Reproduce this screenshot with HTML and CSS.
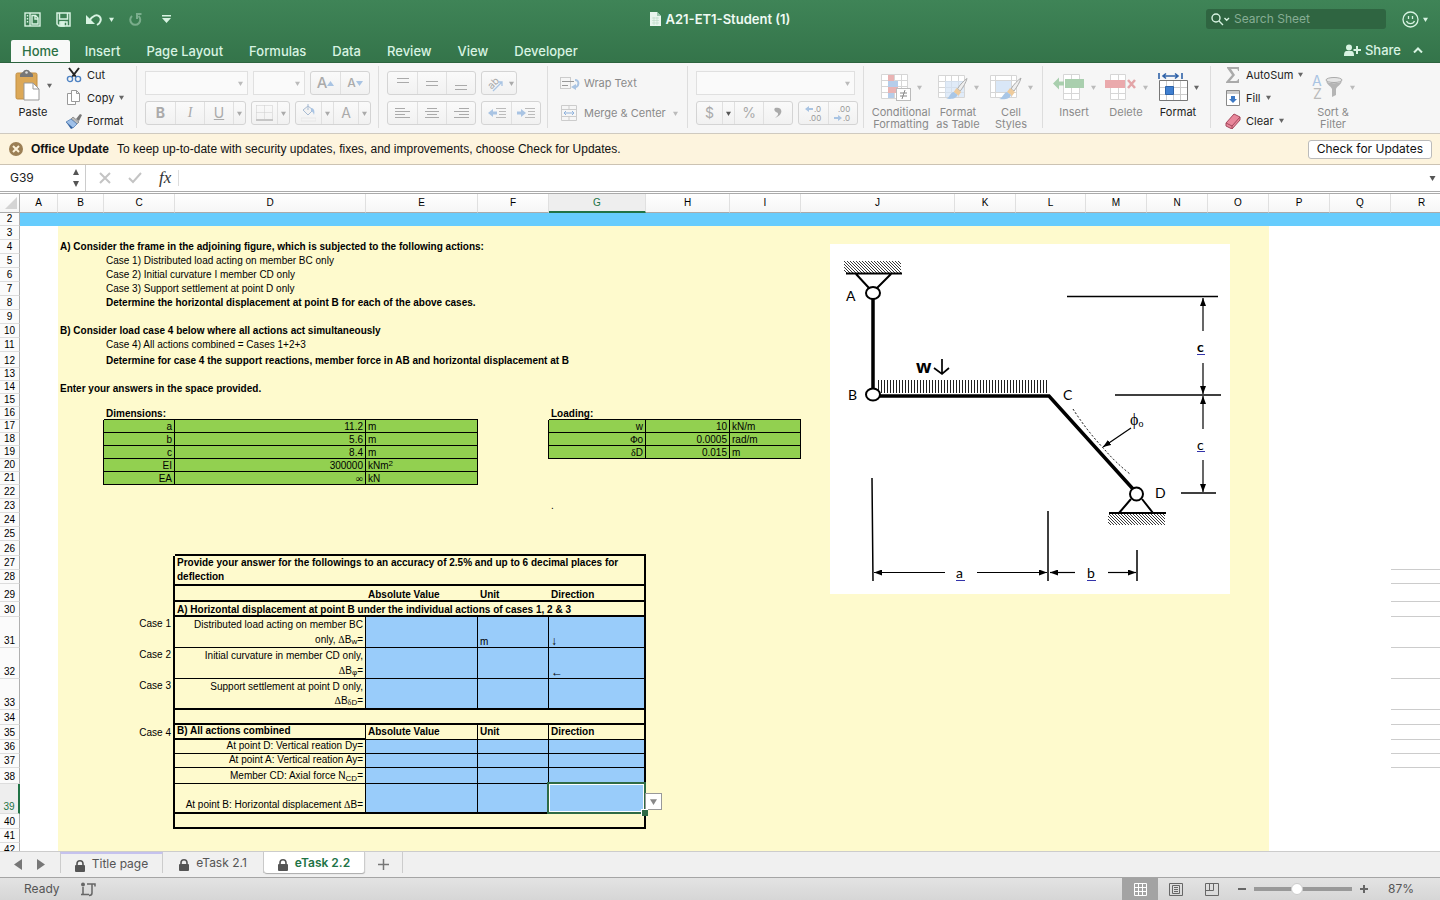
FILE: index.html
```html
<!DOCTYPE html>
<html lang="en">
<head>
<meta charset="utf-8">
<title>A21-ET1-Student (1)</title>
<link rel="stylesheet" href="styles.css">
</head>
<body>
<svg width="0" height="0" class="defs" aria-hidden="true">
  <symbol id="caret" viewBox="0 0 6 6"><path d="M0 1h6L3 6z" fill="currentColor"/></symbol>
  <symbol id="lock" viewBox="0 0 10 12"><path d="M2 6V3.800a3 3 0 0 1 6 0V6" fill="none" stroke="currentColor" stroke-width="1.600"/><rect y="5" width="10" height="7" rx="1" fill="currentColor"/></symbol>
  <symbol id="brush" viewBox="0 0 24 24"><path d="M23 1c-3 2-8 7-10 11l3 2c3-4 6-9 7-13z" fill="#eee" stroke="#aaa"/><path d="M12 11l5 4-3 4-5-4z" fill="#eecb9c"/><path d="M9 15l4 3c-1 4-6 5-12 4 4-1 4-6 8-7z" fill="#a8c6e6"/></symbol>
</svg>

<header class="masthead">
  <div class="titlebar">
    <div class="quick">
      <button aria-label="Gallery"><svg width="17" height="15" viewBox="0 0 17 15" fill="none" stroke="currentColor" stroke-width="1.400"><rect x="1" y="1" width="15" height="13"/><path d="M8 3.500h3.500L14 6v6H8zM11 4v3h3"/><path d="M3.500 3v9" stroke-dasharray="1.500 1.500"/><path d="M6 1v13"/></svg></button>
      <button aria-label="Save"><svg width="15" height="15" viewBox="0 0 15 15" fill="none" stroke="currentColor" stroke-width="1.500"><path d="M1 1h13v13H3l-2-2zM3.500 1v6h8V1"/><path d="M4 14v-4h7v4"/><path d="M5 10h3v4H5z" fill="currentColor"/></svg></button>
      <button class="undo" aria-label="Undo"><svg width="16" height="14" viewBox="0 0 16 14" fill="none" stroke="currentColor" stroke-width="2"><path d="M3 9c4-6 8-7 10.500-4.500S14.500 11 11 13"/><path d="M0 3v9h9z" fill="currentColor" stroke="none"/></svg><svg class="caret" width="5" height="5"><use href="#caret"/></svg></button>
      <button class="redo" aria-label="Repeat"><svg width="13" height="14" viewBox="0 0 13 14" fill="none" stroke="currentColor" stroke-width="2"><path d="M3 4a5 5 0 1 0 6.500 0"/><path d="M8 7V2h4.500"/></svg></button>
      <button aria-label="Customize toolbar"><svg width="9" height="8" viewBox="0 0 9 8" fill="currentColor"><path d="M0 0h9v1.500H0zM0 3h9L4.500 8z"/></svg></button>
    </div>
    <h1 class="doc"><svg width="11" height="14" viewBox="0 0 11 14"><path d="M0 0h7l4 4v10H0z" fill="#e9f5ee"/><path d="M7 0v4h4z" fill="#9cc9ae"/><path d="M2 6h7M2 8.500h7M2 11h7M4 5v8M7 5v8" stroke="#b9d8c5" stroke-width=".6"/></svg>A21-ET1-Student (1)</h1>
    <div class="tools">
      <label class="search"><svg width="20" height="13" viewBox="0 0 20 13" fill="none" stroke="#d8f3e2" stroke-width="1.400"><circle cx="5" cy="5" r="4"/><path d="M8 8l4 4M13.500 5l2.200 2.200L18 5"/></svg><input type="text" placeholder="Search Sheet" aria-label="Search Sheet"></label>
      <button class="smile" aria-label="Feedback"><svg width="17" height="17" viewBox="0 0 17 17" fill="none" stroke="currentColor" stroke-width="1.300"><circle cx="8.500" cy="8.500" r="7.500"/><path d="M4.500 10c1.500 3.500 6.500 3.500 8 0M6.500 5v3M10.500 5v3"/></svg><svg class="caret" width="5" height="5"><use href="#caret"/></svg></button>
    </div>
  </div>
  <nav class="tabs">
    <button class="on">Home</button><button>Insert</button><button>Page Layout</button><button>Formulas</button><button>Data</button><button>Review</button><button>View</button><button>Developer</button>
    <div class="share">
      <button><svg width="17" height="13" viewBox="0 0 17 13" fill="currentColor"><circle cx="5" cy="3.500" r="3"/><path d="M0 12c0-4 1-5 3-5h4c2 0 3 1 3 5zM12 2h2v3h3v2h-3v3h-2V7H9.500V5H12z"/></svg>Share</button>
      <button aria-label="Collapse ribbon"><svg width="10" height="6" viewBox="0 0 10 6" fill="none" stroke="currentColor" stroke-width="2"><path d="M1 5.500L5 1.500l4 4"/></svg></button>
    </div>
  </nav>
</header>

<section class="ribbon" aria-label="Home">
  <div class="group clip">
    <button class="big live">
      <span class="pic"><svg width="26" height="32" viewBox="0 0 26 32"><rect x="1" y="4" width="21" height="26" rx="1.500" fill="#dca857" stroke="#c18f45"/><path d="M5 6c0-2 2-2 3-3 1-3 6-3 7 0 1 1 3 1 3 3v2H5z" fill="#777"/><circle cx="11.500" cy="3.500" r="1.300" fill="#ddd"/><path d="M9 14h9l6 6v11H9z" fill="#fff" stroke="#999"/><path d="M18 14v6h6" fill="none" stroke="#999"/></svg><svg class="caret" width="5" height="5"><use href="#caret"/></svg></span>
      <span>Paste</span>
    </button>
    <div class="stack">
      <button><svg width="16" height="16" viewBox="0 0 16 16" fill="none"><path d="M3 1l7 9M13 1L6 10" stroke="#222" stroke-width="2"/><circle cx="4" cy="12" r="2.600" stroke="#4d82c3" stroke-width="1.400"/><circle cx="12" cy="12" r="2.600" stroke="#4d82c3" stroke-width="1.400"/></svg>Cut</button>
      <button><svg width="16" height="16" viewBox="0 0 16 16" fill="#fff" stroke="#999"><path d="M1.500 3.500h5l3 3v8h-8z"/><path d="M5.500 .5h5l3 3v8h-8zM10.500 .5v3h3"/></svg>Copy<svg class="caret" width="5" height="5"><use href="#caret"/></svg></button>
      <button><svg width="16" height="16" viewBox="0 0 16 16"><path d="M10 6l4-5 2 1-3 6z" fill="#777"/><path d="M7 4l6 5-2 2-6-5z" fill="#bbb" stroke="#777" stroke-width=".7"/><path d="M5 6l6 5-4 4-7-6z" fill="#9fc0e8" stroke="#4876ad" stroke-width=".7"/><path d="M0 9l7 6-2 1z" fill="#2f5f9e"/></svg>Format</button>
    </div>
  </div>

  <div class="group rows font">
    <div class="line">
      <span class="pick wide"><select aria-label="Font" disabled><option></option></select><svg class="caret" width="5" height="5"><use href="#caret"/></svg></span>
      <span class="pick small"><select aria-label="Font size" disabled><option></option></select><svg class="caret" width="5" height="5"><use href="#caret"/></svg></span>
      <span class="seg"><button disabled aria-label="Increase font size"><b class="l15">A</b><svg width="7" height="5" viewBox="0 0 7 5"><path d="M0 5h7L3.500 0z" fill="#a9c4e3"/></svg></button><button disabled aria-label="Decrease font size"><b class="l12">A</b><svg width="7" height="5" viewBox="0 0 7 5"><path d="M0 0h7L3.500 5z" fill="#a9c4e3"/></svg></button></span>
    </div>
    <div class="line">
      <span class="seg"><button disabled><b>B</b></button><button disabled><i class="serif">I</i></button><button disabled><u>U</u></button><button class="drop" disabled aria-label="Underline style"><svg width="5" height="5"><use href="#caret"/></svg></button></span>
      <span class="seg"><button class="mid" disabled aria-label="Borders"><svg width="17" height="16" viewBox="0 0 17 16" fill="none" stroke="#ccc"><path d="M.5.500h16v14M.5.500v14M8.500.500v14M.5 7.500h16" stroke-dasharray="1 1"/><path d="M0 15h17" stroke="#999"/></svg></button><button class="drop" disabled aria-label="Border style"><svg width="5" height="5"><use href="#caret"/></svg></button></span>
      <span class="seg"><button class="mid" disabled aria-label="Fill color"><svg width="15" height="18" viewBox="0 0 15 18"><path d="M2 6l5-4 5 4-5 5z" fill="#f2f2f2" stroke="#a9bcd3"/><path d="M7 0v6" stroke="#a9bcd3"/><path d="M10 4c3 0 4 3 3 7-1-3-2-4-3-4z" fill="#a9c4e3"/><path d="M0 14h15v3H0z" fill="#f4f4f4" stroke="#ddd" stroke-width=".5"/></svg></button><button class="drop" disabled aria-label="Fill choices"><svg width="5" height="5"><use href="#caret"/></svg></button><button class="mid" disabled>A</button><button class="drop" disabled aria-label="Font color choices"><svg width="5" height="5"><use href="#caret"/></svg></button></span>
    </div>
  </div>

  <div class="group rows align">
    <div class="line">
      <span class="seg"><button disabled aria-label="Top align"><svg width="16" height="16" viewBox="0 0 16 16" stroke="#aaa"><path d="M2 3.500h12M2 7.500h12"/></svg></button><button disabled aria-label="Middle align"><svg width="16" height="16" viewBox="0 0 16 16" stroke="#aaa"><path d="M2 6.500h12M2 10.500h12"/></svg></button><button disabled aria-label="Bottom align"><svg width="16" height="16" viewBox="0 0 16 16" stroke="#aaa"><path d="M2 10.500h12M2 14.500h12"/></svg></button></span>
      <span class="seg"><button class="orient" disabled aria-label="Orientation"><svg width="20" height="20" viewBox="0 0 20 20"><text x="3" y="14" transform="rotate(-45 8 11)" class="ab">ab</text><path d="M8 18l9-9M17 13V9h-4" fill="none" stroke="#a9c4e3" stroke-width="1.300"/></svg><svg width="5" height="5"><use href="#caret"/></svg></button></span>
    </div>
    <div class="line">
      <span class="seg"><button disabled aria-label="Align left"><svg width="16" height="12" viewBox="0 0 16 12" stroke="#aaa"><path d="M0 1.500h10M0 4.500h15M0 7.500h10M0 10.500h15"/></svg></button><button disabled aria-label="Center"><svg width="16" height="12" viewBox="0 0 16 12" stroke="#aaa"><path d="M3 1.500h10M1 4.500h14M3 7.500h10M1 10.500h14"/></svg></button><button disabled aria-label="Align right"><svg width="16" height="12" viewBox="0 0 16 12" stroke="#aaa"><path d="M6 1.500h10M1 4.500h15M6 7.500h10M1 10.500h15"/></svg></button></span>
      <span class="seg"><button disabled aria-label="Decrease indent"><svg width="18" height="12" viewBox="0 0 18 12"><path d="M8 1.500h10M11 4.500h7M11 7.500h7M8 10.500h10" stroke="#bbb"/><path d="M0 6l5-4v2.500h4v3H5V10z" fill="#a9c4e3"/></svg></button><button disabled aria-label="Increase indent"><svg width="18" height="12" viewBox="0 0 18 12"><path d="M8 1.500h10M11 4.500h7M11 7.500h7M8 10.500h10" stroke="#bbb"/><path d="M9 6L4 2v2.500H0v3h4V10z" fill="#a9c4e3"/></svg></button></span>
    </div>
  </div>

  <div class="group rows wrap">
    <button class="plain" disabled><svg width="20" height="14" viewBox="0 0 20 14" fill="none"><rect x=".5" y="1.500" width="10" height="11" stroke="#ccc"/><path d="M2 5.500h12M2 9.500h6" stroke="#999"/><path d="M15 4c5 0 4 7 0 7" stroke="#a9c4e3" stroke-width="2"/><path d="M11 11l5-3v6z" fill="#a9c4e3"/></svg>Wrap Text</button>
    <button class="plain" disabled><svg width="20" height="16" viewBox="0 0 20 16" fill="none"><path d="M1.500.500h15v15h-15zM1.500 4.500h15M1.500 11.500h15M9 .5v4M9 11.500v4" stroke="#ccc"/><path d="M4 8h10M6 6L4 8l2 2M12 6l2 2-2 2" stroke="#8fb2dc"/></svg>Merge &amp; Center<svg class="caret" width="5" height="5"><use href="#caret"/></svg></button>
  </div>

  <div class="group rows number">
    <div class="line"><span class="pick format"><select aria-label="Number format" disabled><option></option></select><svg class="caret" width="5" height="5"><use href="#caret"/></svg></span></div>
    <div class="line">
      <span class="seg"><button class="mid" disabled>$</button><button class="drop dark" aria-label="Currency"><svg width="5" height="5"><use href="#caret"/></svg></button><button disabled>%</button><button disabled aria-label="Comma style"><svg width="8" height="12" viewBox="0 0 8 12"><path d="M1 1c8-2 9 7 0 10 4-3 4-5 1-6-2-1-2-3-1-4z" fill="#aaa"/></svg></button></span>
      <span class="seg"><button class="dec" disabled aria-label="Increase decimal"><svg width="20" height="17" viewBox="0 0 20 17"><path d="M1 4l4-3v2h4v2H5v2z" fill="#a9c4e3"/><text x="10" y="7">.0</text><text x="5" y="16">.00</text></svg></button><button class="dec" disabled aria-label="Decrease decimal"><svg width="20" height="17" viewBox="0 0 20 17"><path d="M9 13L5 10v2H1v2h4v2z" fill="#a9c4e3"/><text x="5" y="7">.00</text><text x="10" y="16">.0</text></svg></button></span>
    </div>
  </div>

  <div class="group styles">
    <button class="big w60" disabled>
      <span class="pic"><svg width="30" height="30" viewBox="0 0 30 30"><path d="M.5 2.500h26v24H.500zM.5 8.500h26M.5 14.500h26M.5 20.500h26M7.500 2.500v24M13.500 2.500v24M20.500 2.500v24" fill="#fff" stroke="#d6d6d6"/><path d="M7 3h6v6H7zM7 15h10v6H7z" fill="#e9b3b3"/><path d="M7 9h10v6H7zM7 21h6v5H7z" fill="#b5cdea"/><rect x="15.500" y="16.500" width="14" height="12" fill="#fff" stroke="#bbb"/><path d="M19 21h7M19 24h7M24 18l-3 9" stroke="#888"/></svg><svg class="caret" width="5" height="5"><use href="#caret"/></svg></span>
      <span>Conditional<br>Formatting</span>
    </button>
    <button class="big w54" disabled>
      <span class="pic"><svg width="30" height="30" viewBox="0 0 30 30"><path d="M.5 3.500h26v22H.500zM.5 9.500h26M.5 15.500h26M.5 20.500h26M7.500 3.500v22M13.500 3.500v22M20.500 3.500v22" fill="#fff" stroke="#d6d6d6"/><path d="M7 9h19v16H7z" fill="#d3e3f5" opacity=".7"/><use href="#brush" x="7" y="5" width="23" height="24"/></svg><svg class="caret" width="5" height="5"><use href="#caret"/></svg></span>
      <span>Format<br>as Table</span>
    </button>
    <button class="big w52" disabled>
      <span class="pic"><svg width="32" height="30" viewBox="0 0 32 30"><path d="M.5 3.500h26v22H.500zM.5 8.500h26M.5 20.500h26M5.500 3.500v22M21.500 3.500v22" fill="#fff" stroke="#d6d6d6"/><path d="M6 9h15v11H6z" fill="#d9e7f7"/><use href="#brush" x="8" y="5" width="24" height="24"/></svg><svg class="caret" width="5" height="5"><use href="#caret"/></svg></span>
      <span>Cell<br>Styles</span>
    </button>
  </div>

  <div class="group cells">
    <button class="big w52" disabled>
      <span class="pic"><svg width="32" height="30" viewBox="0 0 32 30"><path d="M10.500 2.500h16v25h-16zM18.500 2.500v25M10.500 21.500h16" fill="#fff" stroke="#d6d6d6"/><path d="M0 11.500l6-6v4h5v4H6v4z" fill="#a9cfae"/><path d="M12 7h19v9H12z" fill="#a9cfae"/></svg><svg class="caret" width="5" height="5"><use href="#caret"/></svg></span>
      <span>Insert</span>
    </button>
    <button class="big w52" disabled>
      <span class="pic"><svg width="32" height="30" viewBox="0 0 32 30"><path d="M5.500 2.500h15v25h-15zM13.500 2.500v25M5.500 21.500h15" fill="#fff" stroke="#d6d6d6"/><path d="M0 8h20v8H0z" fill="#eaa9ac"/><path d="M23 8l7 8M30 8l-7 8" stroke="#e3a5a8" stroke-width="2.500"/></svg><svg class="caret" width="5" height="5"><use href="#caret"/></svg></span>
      <span>Delete</span>
    </button>
    <button class="big w52 live">
      <span class="pic"><svg width="30" height="30" viewBox="0 0 30 30"><path d="M1 1v6M24 1v6M5 4h15M8 1.500L5 4l3 2.500M17 1.500L20 4l-3 2.500" fill="none" stroke="#2f62a8" stroke-width="1.600"/><path d="M1.500 8.500h28v20h-28z" fill="#fff" stroke="#777"/><path d="M8.500 9v19M15.500 9v19M22.500 9v19M2 15.500h27M2 22.500h27" stroke="#ccc"/><path d="M7.500 14.500h8v8h-8z" fill="#3f7fd0" stroke="#2c62a8"/></svg><svg class="caret" width="5" height="5"><use href="#caret"/></svg></span>
      <span>Format</span>
    </button>
  </div>

  <div class="group edit">
    <div class="stack">
      <button><svg width="16" height="16" viewBox="0 0 16 16"><path d="M2 0h12v4h-1c0-2-1-2-2-2H6l4 6-5 6h6c1 0 2-1 2-2h1v4H1v-1l6-7-5-7z" fill="#aaa"/></svg>AutoSum<svg class="caret" width="5" height="5"><use href="#caret"/></svg></button>
      <button><svg width="16" height="16" viewBox="0 0 16 16"><path d="M1.500.500h13v15h-13z" fill="#fff" stroke="#888"/><path d="M2 1h12v3H2z" fill="#ccc"/><path d="M6 6h4v3h2l-4 4-4-4h2z" fill="#3b78c4"/></svg>Fill<svg class="caret" width="5" height="5"><use href="#caret"/></svg></button>
      <button><svg width="16" height="16" viewBox="0 0 16 16" stroke="#a4485c"><path d="M1 10L9 1l6 3v3l-8 9-6-3z" fill="#e8879b"/><path d="M1 10l6 3 8-9M7 13v3" fill="none"/></svg>Clear<svg class="caret" width="5" height="5"><use href="#caret"/></svg></button>
    </div>
    <button class="big w52" disabled>
      <span class="pic"><svg width="32" height="30" viewBox="0 0 32 30"><text x="0" y="14" class="az blue">A</text><text x="1" y="27" class="az">Z</text><ellipse cx="22" cy="8" rx="8" ry="2.500" fill="#e6e6e6" stroke="#aaa"/><path d="M14 9c1 4 5 5 6 8v8l4-2v-6c1-3 5-4 6-8-3 3-13 3-16 0z" fill="#b5b5b5"/></svg><svg class="caret" width="5" height="5"><use href="#caret"/></svg></span>
      <span>Sort &amp;<br>Filter</span>
    </button>
  </div>
</section>

<div class="update">
  <button class="dismiss" aria-label="Dismiss"><svg width="14" height="14" viewBox="0 0 14 14"><circle cx="7" cy="7" r="7" fill="#9b7f55"/><path d="M4 4l6 6M10 4l-6 6" stroke="#fdf3da" stroke-width="2"/></svg></button>
  <strong>Office Update</strong>
  <span class="msg">To keep up-to-date with security updates, fixes, and improvements, choose Check for Updates.</span>
  <button class="check">Check for Updates</button>
</div>

<div class="formula">
  <div class="name"><input type="text" value="G39" aria-label="Name box"><svg width="8" height="18" viewBox="0 0 8 18" fill="#555"><path d="M1 6h6L4 0zM1 12h6l-3 6z"/></svg></div>
  <button aria-label="Cancel"><svg width="12" height="12" viewBox="0 0 12 12" stroke="#c4c4c4" stroke-width="2"><path d="M1 1l10 10M11 1L1 11"/></svg></button>
  <button aria-label="Enter"><svg width="14" height="12" viewBox="0 0 14 12" fill="none" stroke="#c4c4c4" stroke-width="2"><path d="M1 6l4 4 8-9"/></svg></button>
  <button class="fx">fx</button>
  <input class="entry" type="text" aria-label="Formula">
  <button class="expand" aria-label="Expand formula bar"><svg width="7" height="6"><use href="#caret"/></svg></button>
</div>

<main class="sheet">
<table class="grid">
<colgroup><col class="c20"><col class="c38"><col class="c46 y"><col class="c71 y"><col class="c191 y"><col class="c112 y"><col class="c71 y"><col class="c97 y"><col class="c84 y"><col class="c71 y"><col class="c154 y"><col class="c61 y"><col class="c70 y"><col class="c61 y"><col class="c61 y"><col class="c61 y"><col class="c61"><col class="c61"><col></colgroup>
<thead><tr class="h19"><th class="corner" aria-label="Select all"><svg width="12" height="12" viewBox="0 0 12 12"><path d="M12 0v12H0z" fill="#d4d4d4"/></svg></th><th>A</th><th>B</th><th>C</th><th>D</th><th>E</th><th>F</th><th class="cur">G</th><th>H</th><th>I</th><th>J</th><th>K</th><th>L</th><th>M</th><th>N</th><th>O</th><th>P</th><th>Q</th><th class="last">R</th></tr></thead>
<tbody>
<tr class="h13 cyan"><th>2</th><td></td><td colspan="14"></td><td colspan="3"></td></tr>
<tr class="h14"><th>3</th><td></td><td colspan="14"></td><td colspan="3"></td></tr>
<tr class="h14"><th>4</th><td></td><td colspan="14" class="b">A) Consider the frame in the adjoining figure, which is subjected to the following actions:</td><td colspan="3"></td></tr>
<tr class="h14"><th>5</th><td></td><td></td><td colspan="13">Case 1) Distributed load acting on member BC only</td><td colspan="3"></td></tr>
<tr class="h14"><th>6</th><td></td><td></td><td colspan="13">Case 2) Initial curvature I member CD only</td><td colspan="3"></td></tr>
<tr class="h14"><th>7</th><td></td><td></td><td colspan="13">Case 3) Support settlement at point D only</td><td colspan="3"></td></tr>
<tr class="h14"><th>8</th><td></td><td></td><td colspan="13" class="b">Determine the horizontal displacement at point B for each of the above cases.</td><td colspan="3"></td></tr>
<tr class="h14"><th>9</th><td></td><td colspan="14"></td><td colspan="3"></td></tr>
<tr class="h14"><th>10</th><td></td><td colspan="14" class="b">B) Consider load case 4 below where all actions act simultaneously</td><td colspan="3"></td></tr>
<tr class="h14"><th>11</th><td></td><td></td><td colspan="13">Case 4) All actions combined = Cases 1+2+3</td><td colspan="3"></td></tr>
<tr class="h16"><th>12</th><td></td><td></td><td colspan="13" class="b">Determine for case 4 the support reactions, member force in AB and horizontal displacement at B</td><td colspan="3"></td></tr>
<tr class="h13"><th>13</th><td></td><td colspan="14"></td><td colspan="3"></td></tr>
<tr class="h13"><th>14</th><td></td><td colspan="14" class="b">Enter your answers in the space provided.</td><td colspan="3"></td></tr>
<tr class="h13"><th>15</th><td></td><td colspan="14"></td><td colspan="3"></td></tr>
<tr class="h13"><th>16</th><td></td><td></td><td colspan="3" class="b bb">Dimensions:</td><td></td><td colspan="3" class="b bb">Loading:</td><td colspan="6"></td><td colspan="3"></td></tr>
<tr class="h13"><th>17</th><td></td><td class="br"></td><td class="g r">a</td><td class="g r">11.2</td><td class="g">m</td><td class="br"></td><td class="g r">w</td><td class="g r">10</td><td class="g">kN/m</td><td colspan="6"></td><td colspan="3"></td></tr>
<tr class="h13"><th>18</th><td></td><td class="br"></td><td class="g r">b</td><td class="g r">5.6</td><td class="g">m</td><td class="br"></td><td class="g r"><span class="serif">Φ</span>o</td><td class="g r">0.0005</td><td class="g">rad/m</td><td colspan="6"></td><td colspan="3"></td></tr>
<tr class="h13"><th>19</th><td></td><td class="br"></td><td class="g r">c</td><td class="g r">8.4</td><td class="g">m</td><td class="br"></td><td class="g r"><span class="serif">δ</span>D</td><td class="g r">0.015</td><td class="g">m</td><td colspan="6"></td><td colspan="3"></td></tr>
<tr class="h13"><th>20</th><td></td><td class="br"></td><td class="g r">EI</td><td class="g r">300000</td><td class="g">kNm<sup>2</sup></td><td colspan="10"></td><td colspan="3"></td></tr>
<tr class="h13"><th>21</th><td></td><td class="br"></td><td class="g r">EA</td><td class="g r"><span class="serif">∞</span></td><td class="g">kN</td><td colspan="10"></td><td colspan="3"></td></tr>
<tr class="h14"><th>22</th><td></td><td colspan="14"></td><td colspan="3"></td></tr>
<tr class="h14"><th>23</th><td></td><td colspan="5"></td><td colspan="9" class="high">.</td><td colspan="3"></td></tr>
<tr class="h14"><th>24</th><td></td><td colspan="14"></td><td colspan="3"></td></tr>
<tr class="h14"><th>25</th><td></td><td colspan="14"></td><td colspan="3"></td></tr>
<tr class="h15"><th>26</th><td></td><td></td><td></td><td colspan="4" class="tb"></td><td colspan="8"></td><td colspan="3"></td></tr>
<tr class="h14 merged"><th>27</th><td></td><td></td><td class="tr"></td><td colspan="4" rowspan="2" class="b tr note">Provide your answer for the followings to an accuracy of 2.5% and up to 6 decimal places for deflection</td><td colspan="8"></td><td colspan="2"></td><td class="rule"></td></tr>
<tr class="h14"><th>28</th><td></td><td></td><td class="tr"></td><td colspan="8"></td><td colspan="2"></td><td class="rule"></td></tr>
<tr class="h18"><th>29</th><td></td><td></td><td class="tr"></td><td class="tt tb"></td><td class="b tt tb">Absolute Value</td><td class="b tt tb">Unit</td><td class="b tt tb tr">Direction</td><td colspan="8"></td><td colspan="2"></td><td class="rule"></td></tr>
<tr class="h15 low"><th>30</th><td></td><td></td><td class="tr"></td><td colspan="4" class="b tb tr">A) Horizontal displacement at point B under the individual actions of cases 1, 2 &amp; 3</td><td colspan="8"></td><td colspan="2"></td><td class="rule"></td></tr>
<tr class="h31"><th>31</th><td></td><td></td><td class="tr r high">Case 1</td><td class="r br bb ask">Distributed load acting on member BC only, <span class="serif">Δ</span>B<sub>w</sub>=</td><td class="u"></td><td class="u">m</td><td class="u tr arrow">↓</td><td colspan="8"></td><td colspan="2"></td><td class="rule"></td></tr>
<tr class="h31"><th>32</th><td></td><td></td><td class="tr r high">Case 2</td><td class="r br bb ask">Initial curvature in member CD only,<br><span class="serif">Δ</span>B<sub>φ</sub>=</td><td class="u"></td><td class="u"></td><td class="u tr arrow">←</td><td colspan="8"></td><td colspan="2"></td><td class="rule"></td></tr>
<tr class="h31"><th>33</th><td></td><td></td><td class="tr r high">Case 3</td><td class="r br tb ask tight">Support settlement at point D only,<br><span class="serif">Δ</span>B<sub><span class="serif">δ</span>D</sub>=</td><td class="u tb"></td><td class="u tb"></td><td class="u tb tr"></td><td colspan="8"></td><td colspan="2"></td><td class="rule"></td></tr>
<tr class="h15"><th>34</th><td></td><td></td><td class="tr"></td><td colspan="4" class="tb tr"></td><td colspan="8"></td><td colspan="2"></td><td class="rule"></td></tr>
<tr class="h15"><th>35</th><td></td><td></td><td class="tr r">Case 4</td><td class="b tb br">B) All actions combined</td><td class="b bb br">Absolute Value</td><td class="b bb br">Unit</td><td class="b bb tr">Direction</td><td colspan="8"></td><td colspan="2"></td><td class="rule"></td></tr>
<tr class="h14"><th>36</th><td></td><td></td><td class="tr"></td><td class="r bb br">At point D: Vertical reation Dy=</td><td class="u"></td><td class="u"></td><td class="u tr"></td><td colspan="8"></td><td colspan="2"></td><td class="rule"></td></tr>
<tr class="h14"><th>37</th><td></td><td></td><td class="tr"></td><td class="r bb br">At point A: Vertical reation Ay=</td><td class="u"></td><td class="u"></td><td class="u tr"></td><td colspan="8"></td><td colspan="2"></td><td class="rule"></td></tr>
<tr class="h16"><th>38</th><td></td><td></td><td class="tr"></td><td class="r bb br">Member CD: Axial force N<sub>CD</sub>=</td><td class="u"></td><td class="u"></td><td class="u tr"></td><td colspan="8"></td><td colspan="3"></td></tr>
<tr class="h30"><th class="cur">39</th><td></td><td></td><td class="tr"></td><td class="r tb br">At point B: Horizontal displacement <span class="serif">Δ</span>B=</td><td class="u tb"></td><td class="u tb"></td><td class="u tb tr sel"><button class="pull" aria-label="Choose direction"><svg width="9" height="7"><use href="#caret"/></svg></button></td><td colspan="8"></td><td colspan="3"></td></tr>
<tr class="h15"><th>40</th><td></td><td></td><td class="tr"></td><td colspan="4" class="tb tr"></td><td colspan="8"></td><td colspan="3"></td></tr>
<tr class="h14"><th>41</th><td></td><td colspan="14"></td><td colspan="3"></td></tr>
<tr class="h14"><th>42</th><td></td><td colspan="14"></td><td colspan="3"></td></tr>
</tbody>
</table>
<svg class="figure" viewBox="0 0 400 350" role="img" aria-label="Frame ABCD">
  <defs>
    <pattern id="hatch" width="3" height="3" patternUnits="userSpaceOnUse"><path d="M0 0l3 3" stroke="#222" stroke-width=".9"/></pattern>
    <marker id="tip" viewBox="0 0 8 6" refX="8" refY="3" markerWidth="8" markerHeight="6" markerUnits="userSpaceOnUse" orient="auto"><path d="M0 0l8 3-8 3z"/></marker>
  </defs>
  <rect width="400" height="350" fill="#fff"/>
  <rect x="14" y="17" width="57" height="12" fill="url(#hatch)"/>
  <rect x="278" y="270" width="57" height="11" fill="url(#hatch)"/>
  <g fill="none" stroke="#000">
    <path d="M48 142.500h170" stroke="#222" stroke-width="13" stroke-dasharray="1 2"/>
    <path d="M16 29.500h56M26 30l13 14M61 30L47 44M279 269h57M301 255l-12 14M312 255l11 14" stroke-width="2"/>
    <path d="M43 55v90M49 152h170L303 245" stroke-width="3.500"/>
    <g fill="#fff" stroke-width="2"><ellipse cx="43" cy="49" rx="7" ry="6"/><ellipse cx="43" cy="150.500" rx="7" ry="6"/><circle cx="306.500" cy="250" r="6.500"/></g>
    <path d="M112 115v15M104 124l8 6 7-6" stroke-width="1.700"/>
    <path d="M243 165q14 22 32 41 10 12 25 24" stroke-dasharray="2 2"/>
    <path d="M237 52.500h151M285 151h106M351 249h35M42 234l1 103M218 267v70M307 306v31" stroke-width="1.500"/>
    <g stroke-width="1.200"><path d="M373 87V54" marker-end="url(#tip)"/><path d="M373 119v31" marker-end="url(#tip)"/><path d="M373 185v-33" marker-end="url(#tip)"/><path d="M373 216v32" marker-end="url(#tip)"/><path d="M115 328.500H44" marker-end="url(#tip)"/><path d="M147 328.500h70" marker-end="url(#tip)"/><path d="M245 328.500h-25" marker-end="url(#tip)"/><path d="M278 328.500h28" marker-end="url(#tip)"/><path d="M301 184l-28 19" marker-end="url(#tip)"/></g>
    <path d="M367 110l1 1 1-1 1 1 1-1 1 1 1-1 1 1 1-1M367 207l1 1 1-1 1 1 1-1 1 1 1-1 1 1 1-1M126 337l1-1 1 1 1-1 1 1 1-1 1 1 1-1 1 1 1-1M257 337l1-1 1 1 1-1 1 1 1-1 1 1 1-1 1 1 1-1" stroke="#33a"/>
  </g>
  <g class="lab"><text x="16" y="57">A</text><text x="18" y="156">B</text><text x="233" y="156">C</text><text x="325" y="254">D</text><text x="367" y="108" class="semi">c</text><text x="367" y="206">c</text><text x="126" y="334">a</text><text x="257" y="334">b</text><text x="86" y="129" class="load">w</text><text x="300" y="181" class="phi">ϕ<tspan class="tiny" dy="2">o</tspan></text></g>
</svg>
</main>

<footer>
  <nav class="sheets">
    <button class="nav" aria-label="Previous sheet"><svg width="8" height="11" viewBox="0 0 8 11"><path d="M8 0v11L0 5.500z" fill="#777"/></svg></button>
    <button class="nav" aria-label="Next sheet"><svg width="8" height="11" viewBox="0 0 8 11"><path d="M0 0v11l8-5.500z" fill="#777"/></svg></button>
    <button class="tab first"><svg width="10" height="12"><use href="#lock"/></svg>Title page</button>
    <button class="tab"><svg width="10" height="12"><use href="#lock"/></svg>eTask 2.1</button>
    <button class="tab active"><svg width="10" height="12"><use href="#lock"/></svg>eTask 2.2</button>
    <button class="add" aria-label="Add sheet"><svg width="11" height="11" viewBox="0 0 11 11" stroke="#777" stroke-width="1.500"><path d="M5.500 0v11M0 5.500h11"/></svg></button>
  </nav>
  <div class="status">
    <span>Ready</span>
    <button class="macro" aria-label="Record macro"><svg width="16" height="15" viewBox="0 0 16 15" fill="none" stroke="#666" stroke-width="1.500"><circle cx="3" cy="2.500" r="2" fill="#666" stroke="none"/><path d="M7 2h8v2.500M3 5v7M1 12.500h8M12 2v9q0 2.500-3 2.500"/></svg></button>
    <div class="views">
      <button class="on" aria-label="Normal view"><svg width="13" height="13" viewBox="0 0 13 13" fill="none" stroke="#fff"><path d="M.5.500h12v12H.500zM4.500.500v12M8.500.500v12M.5 4.500h12M.5 8.500h12"/></svg></button>
      <button aria-label="Page layout view"><svg width="14" height="13" viewBox="0 0 14 13" fill="none" stroke="#666"><path d="M.5.500h13v12H.500zM3.500 2.500h7v8h-7zM5 4.500h4M5 6.500h4M5 8.500h4"/></svg></button>
      <button aria-label="Page break view"><svg width="14" height="13" viewBox="0 0 14 13" fill="none" stroke="#666"><path d="M.5.500h13v12H.500zM4.500.500v7M8.500.500v7M.5 7.500h8"/></svg></button>
    </div>
    <button class="step" aria-label="Zoom out"><svg width="8" height="8" viewBox="0 0 8 8"><path d="M0 3h8v2H0z" fill="#666"/></svg></button>
    <input type="range" min="10" max="190" value="87" aria-label="Zoom">
    <button class="step" aria-label="Zoom in"><svg width="8" height="8" viewBox="0 0 8 8"><path d="M0 3h3V0h2v3h3v2H5v3H3V5H0z" fill="#666"/></svg></button>
    <span class="pct">87%</span>
  </div>
</footer>
</body>
</html>
```

FILE: styles.css
```css
* { box-sizing: border-box; }
body { margin: 0; height: 100vh; display: flex; flex-direction: column; overflow: hidden; font: 12px/16px Inter, Roboto, sans-serif; color: #222; }
button, input, select { font: inherit; color: inherit; margin: 0; padding: 0; border: 0; background: none; }
button { display: flex; align-items: center; justify-content: center; }
svg { display: block; flex: none; }
.defs { position: absolute; }
.serif { font-family: "Liberation Serif", serif; }

.masthead { flex: none; color: #d8f3e2; background: linear-gradient(#3f8457, #34744a); border-bottom: 1px solid #2c633e; }
.titlebar { height: 38px; display: grid; grid-template-columns: 1fr auto 1fr; align-items: center; }
.quick { display: flex; align-items: center; gap: 15px; padding-left: 24px; }
.undo { gap: 7px; }
.redo { opacity: .4; margin-right: 5px; }
.doc { margin: 0; display: flex; align-items: center; gap: 5px; font-size: 13px; line-height: 16px; font-weight: 600; color: #effaf3; }
.tools { display: flex; justify-content: flex-end; align-items: center; gap: 16px; padding-right: 12px; }
.search { width: 180px; height: 20px; display: flex; align-items: center; gap: 3px; padding-left: 5px; background: #2f6541; border-radius: 3px; }
.search input { width: 140px; outline: 0; }
.search input::placeholder { color: #86ad94; opacity: 1; }
.smile { gap: 4px; }
.tabs { height: 24px; display: flex; align-items: flex-end; padding-left: 11px; font-size: 13px; font-weight: 500; }
.tabs > button { height: 22px; padding: 0 13px; }
.tabs > .on { padding: 0 11px; margin-right: 2px; background: #f8f9f8; color: #2b7145; border-radius: 2px 2px 0 0; }
.share { margin-left: auto; height: 24px; display: flex; gap: 12px; padding-right: 17px; }
.share button { gap: 4px; }

.ribbon { flex: none; height: 71px; display: flex; background: #f6f6f6; border-bottom: 1px solid #cfcac0; font-size: 11px; line-height: 12px; color: #222; }
.group { position: relative; display: flex; flex: none; border-right: 1px solid transparent; border-image: linear-gradient(transparent 6%, #ddd 6% 92%, transparent 92%) 1; }
.group.edit { border-image: none; border: 0; }
.ribbon button:disabled { color: #8a8a8a; }
.caret { color: #666; }
.masthead .caret { color: inherit; }
.ribbon button:disabled .caret, .pick .caret { color: #bbb; }
.big { flex-direction: column; justify-content: flex-start; padding-top: 8px; text-align: center; line-height: 12px; gap: 3px; }
.pic { display: flex; align-items: center; gap: 6px; height: 32px; }
.w60 { width: 60px; } .w54 { width: 54px; } .w52 { width: 52px; }
.stack { display: flex; flex-direction: column; }
.stack button { height: 23px; gap: 5px; justify-content: flex-start; }
.clip { width: 137px; padding-left: 9px; }
.clip .big { width: 48px; padding-top: 6px; gap: 5px; }
.clip .stack { padding-left: 9px; }
.rows { flex-direction: column; gap: 6px; padding: 8px 8px 0; }
.line { display: flex; gap: 5px; }
.font { width: 242px; } .align { width: 169px; } .wrap { width: 140px; padding-left: 12px; } .number { width: 176px; }
.pick { position: relative; height: 24px; border: 1px solid #e0e0e0; background: #fafafa; }
.pick select { width: 100%; height: 22px; appearance: none; }
.pick .caret { position: absolute; right: 4px; top: 9px; }
.wide { width: 104px; } .small { width: 52px; } .format { width: 159px; }
.seg { display: flex; height: 24px; border: 1px solid #d4d4d4; border-radius: 3px; background: linear-gradient(#fafafa, #f1f1f1); }
.seg button { width: 29px; font-size: 14px; }
.seg button + button { border-left: 1px solid #e0e0e0; }
.ribbon .seg button:disabled { color: #aaa; }
.seg .mid { width: 25px; }
.seg .drop { width: 12px; color: #bbb; }
.seg .dark { color: #555; }
.seg .orient { width: 34px; gap: 4px; }
.l15 { font-size: 15px; font-weight: 500; } .l12 { font-size: 12px; font-weight: 500; }
.ab { font-size: 10px; fill: #aaa; }
.dec text { font-size: 8px; fill: #999; }
.az { font-size: 14px; fill: #bbb; } .az.blue { fill: #a9c4e3; }
.plain { height: 24px; gap: 4px; justify-content: flex-start; }
.plain .caret { margin-left: 3px; }
.styles { width: 179px; padding-left: 7px; }
.cells { width: 168px; padding-left: 5px; }
.edit { padding-left: 14px; }
.edit .stack { width: 82px; }

.update { flex: none; height: 31px; display: flex; align-items: center; gap: 8px; padding: 0 8px 0 9px; background: #fdf4de; border-bottom: 1px solid #ccc3b3; font-family: "Liberation Sans", Arial, sans-serif; font-size: 12px; color: #111; }
.check { margin-left: auto; height: 19px; padding: 0 8px; border: 1px solid #bbb; border-radius: 3px; background: #fff; font-family: Inter, sans-serif; }

.formula { flex: none; height: 29px; display: flex; align-items: center; gap: 17px; background: #fff; border-bottom: 3px double #aaa; }
.name { width: 86px; height: 26px; display: flex; align-items: center; justify-content: space-between; padding: 0 5px 0 10px; border-right: 1px solid #ccc; }
.name input { width: 50px; }
.formula > button:nth-child(2) { margin-left: -4px; }
.fx { font: italic 17px/20px "Liberation Serif", serif; color: #333; }
.entry { flex: 1; height: 16px; margin-left: -10px; border-left: 1px solid #ddd; }
.expand { padding-right: 4px; color: #555; }

.sheet { position: relative; flex: 1; min-height: 0; overflow: hidden; background: #fff; font: 10px/12px "Liberation Sans", Arial, sans-serif; color: #000; }
.grid { width: 100%; table-layout: fixed; border-collapse: separate; border-spacing: 0; line-height: 12px; }
.c20 { width: 20px; } .c38 { width: 38px; } .c46 { width: 46px; } .c61 { width: 61px; } .c70 { width: 70px; } .c71 { width: 71px; } .c84 { width: 84px; } .c97 { width: 97px; } .c112 { width: 112px; } .c154 { width: 154px; } .c191 { width: 191px; }
.y { background: #fefacd; }
.h13 { height: 13px; } .h14 { height: 14px; } .h15 { height: 15px; } .h16 { height: 16px; } .h18 { height: 18px; } .h19 { height: 19px; } .h30 { height: 30px; } .h31 { height: 31px; }
td { padding: 0 2px; vertical-align: bottom; white-space: nowrap; line-height: 11px; }
.h14 td, .h15 td, .h16 td, .h30 td { padding-bottom: 2px; }
.merged td, .low td { padding-bottom: 0; }
th { padding: 0; font-weight: 400; vertical-align: bottom; border-right: 1px solid #b0b0b0; border-bottom: 1px solid #ddd; background: #fbfbfb; }
tbody th { overflow: hidden; }
thead th { vertical-align: middle; background: linear-gradient(#fff, #f6f6f6); border-right-color: #e0e0e0; border-bottom-color: #aaa; }
thead .cur { background: #eee; color: #217346; border-bottom: 2px solid #217346; }
tbody .cur { color: #217346; border-right: 2px solid #217346; background: #eee; }
.corner { border-right-color: #b0b0b0; }
.corner svg { margin-left: 5px; }
.last { border-right: 0; padding-left: 12px; }
.cyan td { background: #66ccfd; }
.b { font-weight: 700; }
.r { text-align: right; }
.high { vertical-align: top; padding-top: 1px; }
.g { background: #92d050; border: solid #000; border-width: 0 1px 1px 0; }
.u { background: #99ccfa; border: solid #000; border-width: 0 1px 1px 0; }
.br { border-right: 1px solid #000; }
.bb { border-bottom: 1px solid #000; }
.tt { border-top: 2px solid #000; }
.tb { border-bottom: 2px solid #000; }
.tr { border-right: 2px solid #000; }
.rule { border-bottom: 1px solid #ccc; }
.note { white-space: normal; line-height: 14px; }
.ask { white-space: normal; line-height: 15px; }
.tight { line-height: 14px; }
.arrow { font-family: "Liberation Serif", serif; font-size: 12px; }
sub, sup { font-size: 8px; line-height: 0; }
sub { vertical-align: -2px; } sup { vertical-align: 3px; }
.h31 sub { vertical-align: -1px; }
.sel { position: relative; }
.sel::before { content: ""; position: absolute; inset: -2px; border: 2px solid #2f6b45; box-shadow: inset 0 0 0 1px #fff; }
.sel::after { content: ""; position: absolute; right: -4px; bottom: -4px; width: 6px; height: 6px; background: #2f6b45; border: solid #fff; border-width: 1px 0 0 1px; }
.pull { position: absolute; left: 96px; bottom: 2px; width: 17px; height: 17px; border: 1px solid #999; background: #fff; color: #888; }
.figure { position: absolute; left: 830px; top: 50px; width: 400px; height: 350px; }
.lab { font: 14px Lato, "Open Sans", sans-serif; }
.semi { font-weight: 700; }
.load { font-size: 18px; font-weight: 700; font-family: "Open Sans", sans-serif; }
.phi { font: 16px "Liberation Serif", serif; } .tiny { font-size: 10px; }

footer { flex: none; color: #555; }
.sheets { height: 26px; display: flex; align-items: flex-start; background: #f0f0f0; border-top: 1px solid #ccc; }
.nav { width: 8px; height: 25px; margin-left: 14px; }
.nav + .nav { margin: 0 15px 0 15px; }
.tab { height: 21px; width: 101px; gap: 7px; border-right: 1px solid #ccc; }
.tab svg { margin-top: 4px; }
.first { width: 103px; border-top: 2px solid #c5c2ee; border-left: 1px solid #ccc; }
.active { background: #fff; color: #217346; font-weight: 600; border-radius: 0 0 3px 3px; box-shadow: 0 1px 1px #aaa; }
.active svg { color: #555; }
.add { width: 38px; height: 21px; border-right: 1px solid #ccc; padding-top: 3px; }
.status { height: 23px; display: flex; align-items: center; padding: 0 26px 0 24px; background: linear-gradient(#e3e3e3, #d6d6d6); border-top: 1px solid #a5a5a5; }
.macro { margin-left: 20px; }
.views { margin-left: auto; display: flex; height: 22px; padding-right: 8px; }
.views button { width: 36px; }
.views .on { background: #a3a3a3; }
.step { width: 8px; }
.status input { appearance: none; width: 98px; height: 12px; margin: 0 8px; background: linear-gradient(transparent 4px, #999 4px 8px, transparent 8px); }
.status input::-webkit-slider-thumb { appearance: none; width: 12px; height: 12px; border-radius: 50%; background: #fff; border: 1px solid #ccc; }
.pct { margin-left: 20px; }
```
